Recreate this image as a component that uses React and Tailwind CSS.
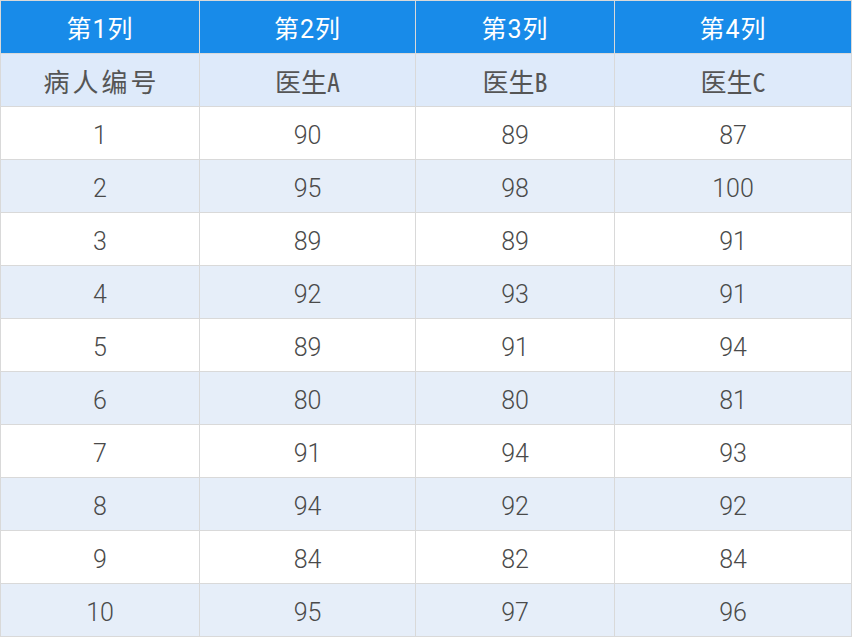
const header = ["第1列", "第2列", "第3列", "第4列"];
const sub = ["病人编号", "医生A", "医生B", "医生C"];
const data = [
  [1, 90, 89, 87],
  [2, 95, 98, 100],
  [3, 89, 89, 91],
  [4, 92, 93, 91],
  [5, 89, 91, 94],
  [6, 80, 80, 81],
  [7, 91, 94, 93],
  [8, 94, 92, 92],
  [9, 84, 82, 84],
  [10, 95, 97, 96],
];

const mono = { fontFamily: '"Noto Sans Mono CJK SC", "Noto Sans CJK SC", monospace' };
const sans = { fontFamily: 'Roboto, "Noto Sans CJK SC", sans-serif' };

export default function App() {
  return (
    <div className="w-[854px] h-[638px] bg-white" style={sans}>
      <div className="grid grid-cols-[199px_216px_199px_237px] w-[852px] border-l border-t border-[#d9d9d9]">
        {header.map((h, i) => (
          <div key={"h" + i} className="h-[53px] pt-[5px] flex items-center justify-center border-r border-b border-[#d9d9d9] bg-[#188be9] text-white text-[25px] tracking-[1px]">
            {h}
          </div>
        ))}
        {sub.map((h, i) => (
          <div key={"s" + i} style={mono} className={"h-[53px] flex items-center justify-center border-r border-b border-[#d9d9d9] bg-[#deeafa] text-[#555555] text-[26px] " + (i === 0 ? "tracking-[3px] pl-[3px]" : "")}>
            {h}
          </div>
        ))}
        {data.map((row, r) =>
          row.map((v, c) => (
            <div
              key={r + "-" + c}
              className={
                "h-[53px] pt-[6px] flex items-center justify-center border-r border-b border-[#d9d9d9] text-[#4a4a4a] text-[25px] font-light " +
                (r % 2 === 1 ? "bg-[#e6eef9]" : "bg-white")
              }
            >
              {v}
            </div>
          ))
        )}
      </div>
    </div>
  );
}
